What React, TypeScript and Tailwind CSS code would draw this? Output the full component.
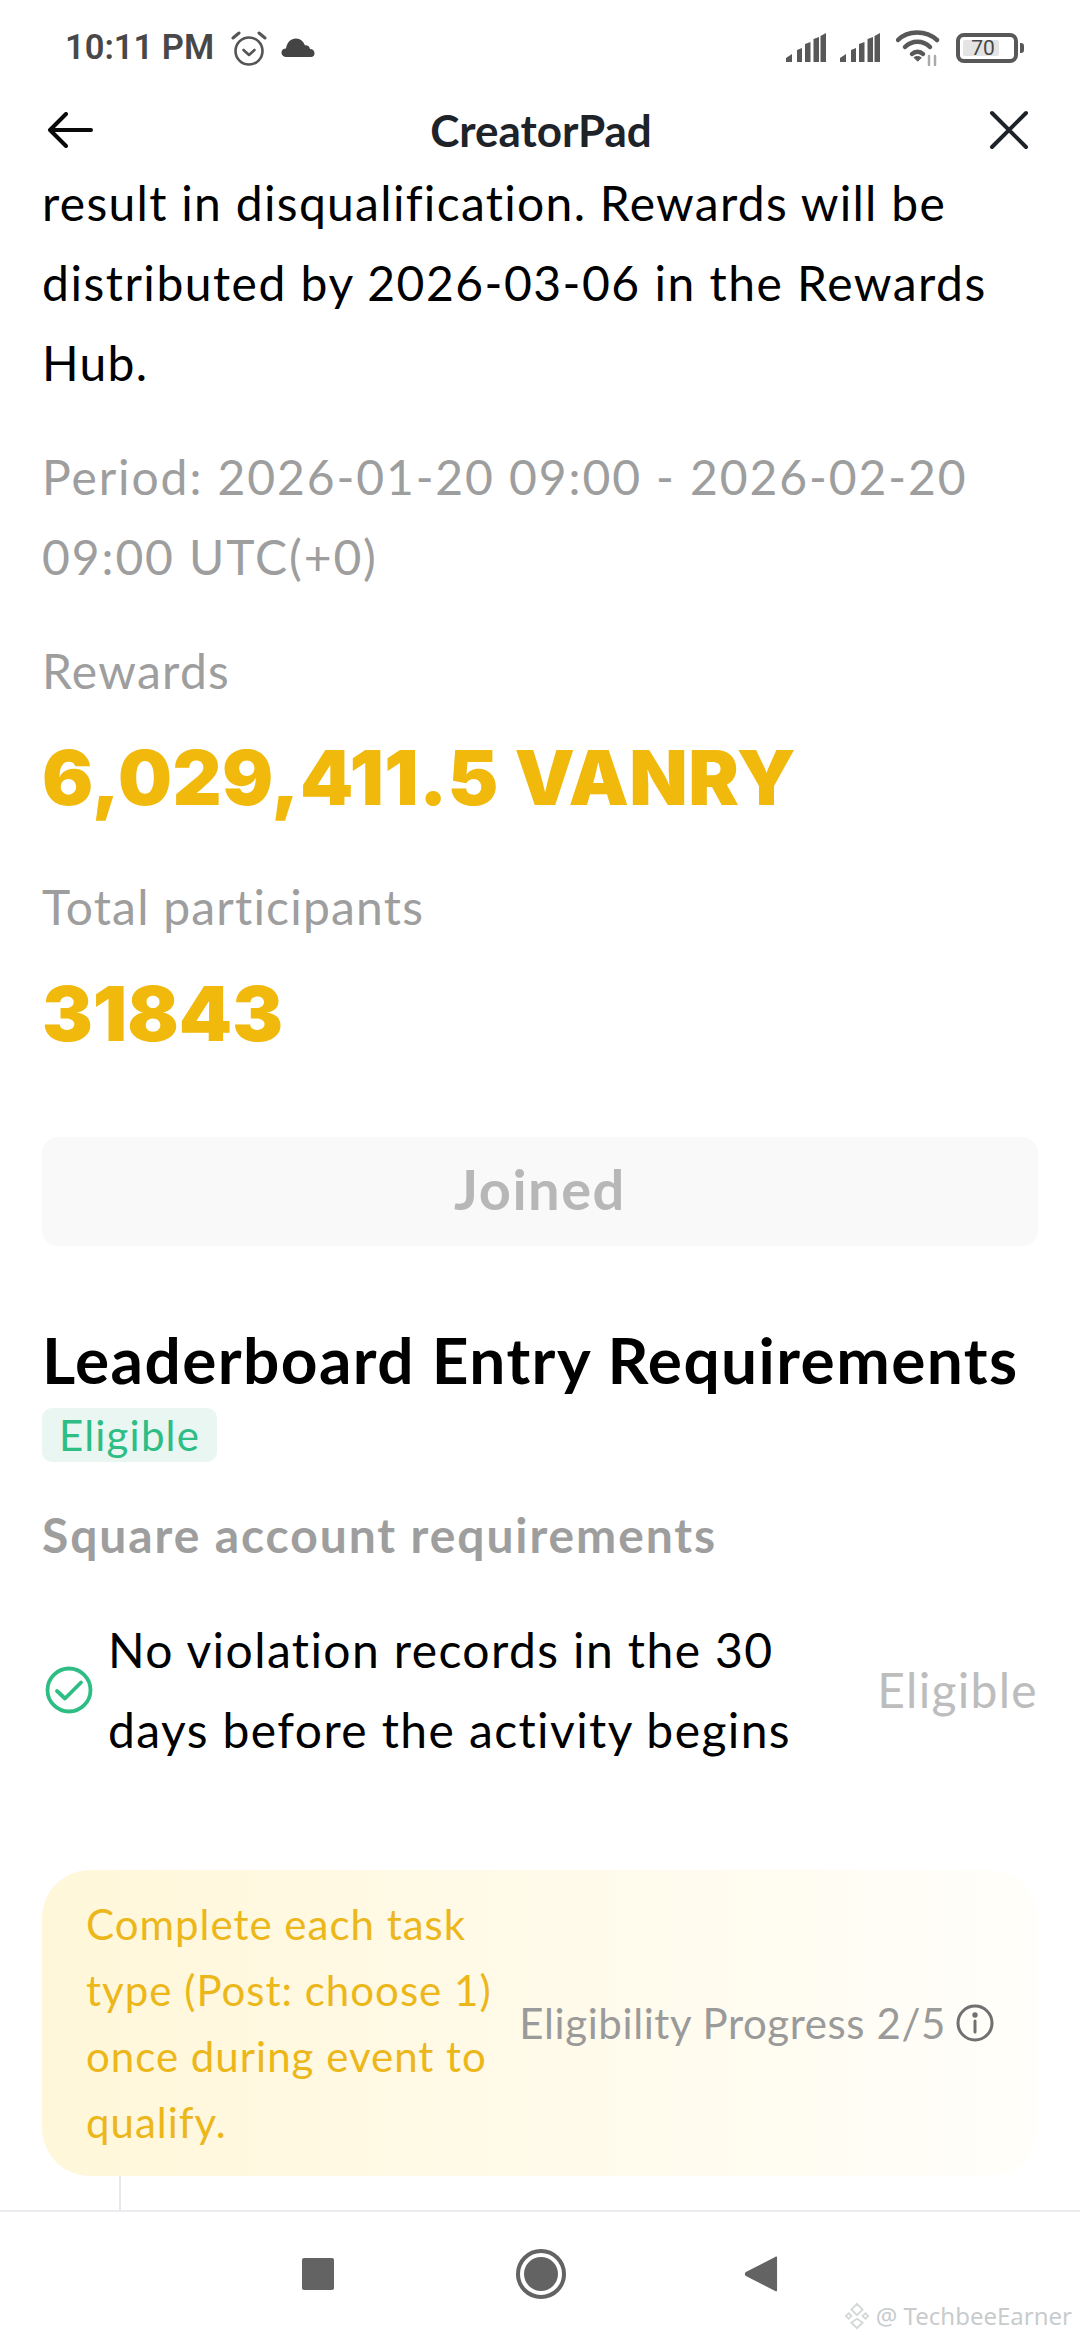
import React from "react";

const font = { fontFamily: "Lato, 'Noto Sans', sans-serif" };
const inter = { fontFamily: "Inter, Lato, sans-serif" };

function Signal() {
  return (
    <svg width="40" height="30" viewBox="0 0 40 30" fill="#585858">
      <path d="M0 29V25L6 21V29ZM11 29V17L16 15V29ZM19 29V11L24.500 9V29ZM27.500 29V6L33 4V29ZM34.500 29V3L40 0V29Z" />
    </svg>
  );
}

function App() {
  return (
    <div className="relative flex h-[2340px] w-[1080px] flex-col overflow-hidden bg-white" style={font}>
      {/* status bar */}
      <div className="flex h-[90px] shrink-0 items-center justify-between pl-[65px] pr-[56px] pt-[6px]">
        <div className="flex items-center">
          <span className="text-[34.500px] font-semibold text-[#484848]" style={{ fontFamily: "Roboto, sans-serif" }}>10:11 PM</span>
          <svg className="ml-[17px]" width="36" height="36" viewBox="0 0 36 36" fill="none" stroke="#555" strokeWidth="2.6" strokeLinecap="round" strokeLinejoin="round">
            <circle cx="18" cy="21" r="13.5" />
            <path d="M12.5 20L18 25L23.5 20" />
            <path d="M2 8L8 3M34 8L28 3" strokeWidth="3" />
          </svg>
          <svg className="ml-[14px]" width="34" height="22" viewBox="0 0 34 22" fill="#444">
            <path d="M6 20C2.5 20 .5 18 .5 15.500C.5 13 2.500 11.500 5 11.500C6 5 10 1.500 15 1.500C19.500 1.500 22.500 4.500 24 8.500C25 8 28.500 8.500 29 12C32 12 33.500 14 33.500 16.500C33.500 18.500 32 20 30 20Z" />
          </svg>
        </div>
        <div className="flex items-center">
          <Signal />
          <div className="ml-[14px]"><Signal /></div>
          <svg className="ml-[16px]" width="44" height="36" viewBox="0 0 44 36" fill="none" stroke="#585858" strokeLinecap="round">
            <path d="M2 10C12 0 30 0 41 10" strokeWidth="4.500" />
            <path d="M9 17C16 10 27 10 34 17" strokeWidth="4.500" />
            <path d="M16 24C19 21 24 21 27 24" strokeWidth="4.500" />
            <path d="M21.500 31L18 27.500C20 26 23 26 25 27.500Z" fill="#585858" strokeWidth="1" />
            <path d="M33 26V35M39 26V35" stroke="#aaa" strokeWidth="2.500" />
          </svg>
          <div className="relative ml-[16px] flex h-[30px] w-[62px] items-center justify-center rounded-[8px] border-[4px] border-[#585858] text-[21px] leading-none text-[#484848]" style={{ fontFamily: "Roboto, sans-serif" }}>
            <span className="absolute bottom-[3px] left-[3px] top-[3px] w-[36px] rounded-[2px] bg-[#e4e4e4]" />
            <span className="relative -ml-[8px]">70</span>
          </div>
          <div className="ml-[2px] h-[10px] w-[4px] rounded-r-[3px] bg-[#585858]" />
        </div>
      </div>

      {/* header */}
      <div className="relative flex h-[80px] shrink-0 items-center justify-between pl-[47px] pr-[51px]">
        <svg width="46" height="36" viewBox="0 0 46 36" fill="none" stroke="#0a0a0a" strokeWidth="4" strokeLinecap="round" strokeLinejoin="round">
          <path d="M44 18H3M19 2L3 18L19 34" />
        </svg>
        <span className="text-[44px] font-bold text-[#1e2329]">CreatorPad</span>
        <svg width="40" height="40" viewBox="0 0 40 40" fill="none" stroke="#1e2329" strokeWidth="4" strokeLinecap="round">
          <path d="M3 3L37 37M37 3L3 37" />
        </svg>
      </div>

      {/* scrolled content */}
      <div className="flex min-h-0 flex-1 flex-col overflow-hidden px-[42px]">
        <p className="-mt-[7px] text-[48px] leading-[80px] tracking-[1.3px] text-black">result in disqualification. Rewards will be<br /><span className="tracking-[1.500px]">distributed by 2026-03-06 in the Rewards</span><br />Hub.</p>
        <p className="mt-[34px] text-[48px] leading-[80px] tracking-[1.900px] text-[#9e9e9e]">Period: 2026-01-20 09:00 - 2026-02-20<br />09:00 UTC(+0)</p>
        <p className="mt-[44px] text-[48px] leading-[60px] tracking-[1.3px] text-[#9e9e9e]">Rewards</p>
        <p className="mt-[31px] text-[76px] font-black leading-[90px] tracking-[0.4px] text-[#f0b90b]" style={inter}>6,029,411.5 VANRY</p>
        <p className="mt-[55px] text-[48px] leading-[60px] tracking-[1.200px] text-[#9e9e9e]">Total participants</p>
        <p className="mt-[31px] text-[76px] font-black leading-[90px] text-[#f0b90b]" style={inter}>31843</p>
        <div className="mt-[79px] flex h-[109px] shrink-0 items-center justify-center rounded-[16px] bg-[#f9f9f9] pb-[5px] text-[56px] font-bold tracking-[1.5px] text-[#b7b7b7]">Joined</div>
        <h2 className="mt-[79px] text-[64px] font-bold leading-[70px] tracking-[1.4px] text-black">Leaderboard Entry Requirements</h2>
        <div className="mt-[13px] flex h-[54px] w-[175px] items-center justify-center rounded-[10px] bg-[#eaf6f1] text-[42px] tracking-[1.2px] text-[#2ebd85]">Eligible</div>
        <p className="mt-[43px] text-[48px] font-bold leading-[60px] tracking-[1.900px] text-[#9e9e9e]">Square account requirements</p>
        <div className="mt-[45px] flex items-center">
          <svg className="ml-[3px] shrink-0" width="48" height="48" viewBox="0 0 48 48" fill="none" stroke="#2ebd85" strokeWidth="3.800" strokeLinecap="round" strokeLinejoin="round">
            <circle cx="24" cy="24" r="21.500" />
            <path d="M12 25L20 32.500L36 16.500" />
          </svg>
          <p className="ml-[15px] flex-1 text-[48px] leading-[80px] tracking-[1.400px] text-black">No violation records in the 30<br />days before the activity begins</p>
          <span className="text-[48px] tracking-[1.3px] text-[#bdbdbd]">Eligible</span>
        </div>
        <div className="mt-[100px] flex h-[306px] shrink-0 items-center rounded-[48px] bg-gradient-to-r from-[#fff7d9] to-[#fffefa] pl-[44px] pr-[44px]">
          <p className="w-[416px] shrink-0 whitespace-nowrap text-[42px] leading-[66px] tracking-[1px] text-[#ecb71a]">Complete each task<br />type (Post: choose 1)<br />once during event to<br />qualify.</p>
          <div className="flex flex-1 items-center justify-end">
            <span className="whitespace-nowrap text-[42px] tracking-[0.600px] text-[#9a9a9a]">Eligibility Progress 2/5</span>
            <svg className="ml-[10px] shrink-0" width="38" height="38" viewBox="0 0 38 38" fill="none" stroke="#707070" strokeWidth="3" strokeLinecap="round">
              <circle cx="19" cy="19" r="17" />
              <path d="M19 17V28" />
              <circle cx="19" cy="11" r="1.200" fill="#707070" />
            </svg>
          </div>
        </div>
        <div className="ml-[77px] h-[34px] w-[2px] shrink-0 bg-[#e6e8ea]" />
      </div>

      {/* navigation bar */}
      <div className="flex h-[130px] shrink-0 items-center justify-center border-t-2 border-[#eaecef] pb-[4px]">
        <div className="h-[32px] w-[32px] rounded-[2px] bg-[#636363]" />
        <div className="ml-[182px] flex h-[50px] w-[50px] items-center justify-center rounded-full border-[4px] border-[#636363]">
          <div className="h-[34px] w-[34px] rounded-full bg-[#636363]" />
        </div>
        <svg className="ml-[178px]" width="34" height="38" viewBox="0 0 36 38" fill="#636363">
          <path d="M33 1C34.500 0 35 1 35 2V36C35 37 34.500 38 33 37L2 21C.5 20 .5 18 2 17Z" />
        </svg>
      </div>

      {/* watermark */}
      <div className="absolute bottom-[6px] right-[8px] flex items-center text-[#c8cccc]">
        <svg width="28" height="30" viewBox="0 0 30 30" fill="none" stroke="#d4d8d8" strokeWidth="2">
          <path d="M15 2L21 8L15 14L9 8ZM6 12L9 15L6 18L3 15ZM24 12L27 15L24 18L21 15ZM15 18L21 22L15 28L9 22Z" />
        </svg>
        <span className="ml-[5px] text-[24px]" style={{ fontFamily: "'Noto Sans', sans-serif" }}>@ TechbeeEarner</span>
      </div>
    </div>
  );
}

export default App;
